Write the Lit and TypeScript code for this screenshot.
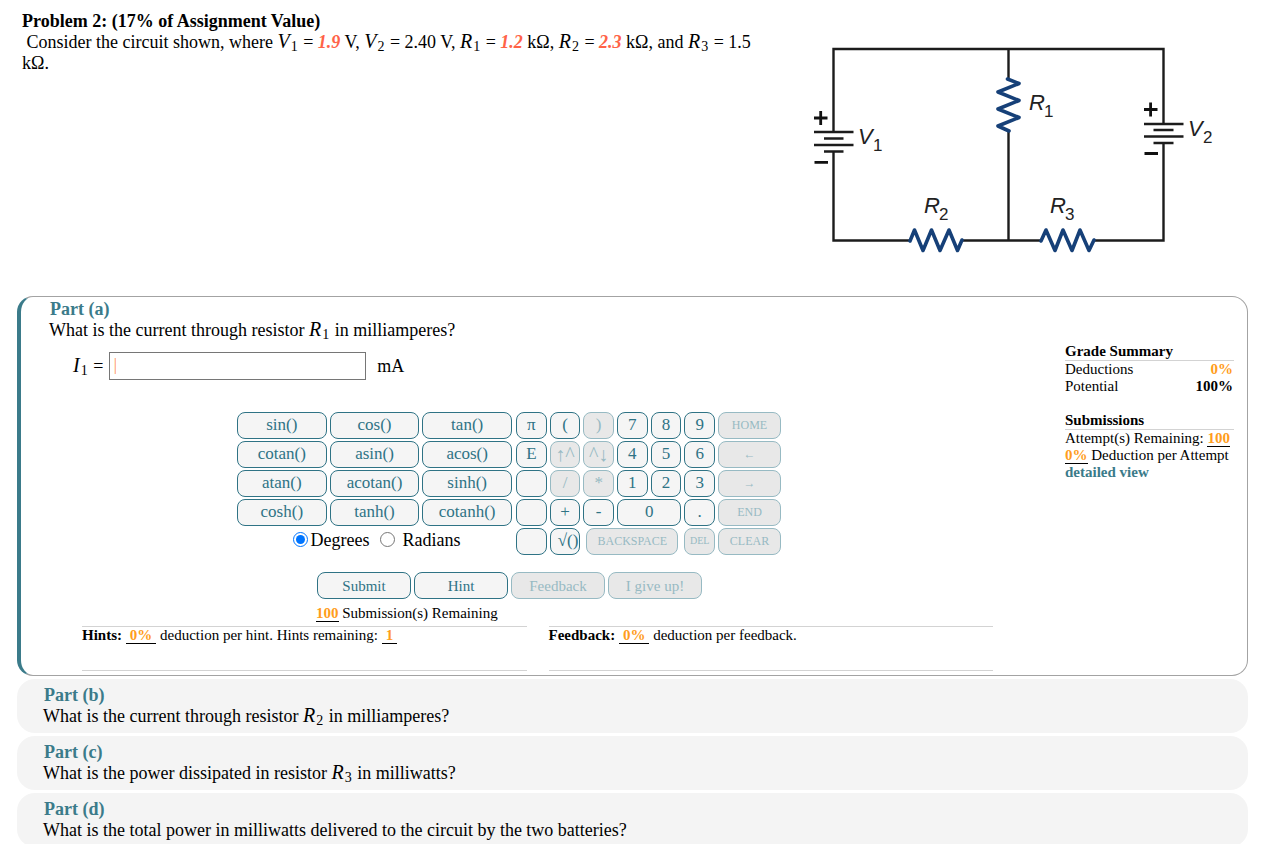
import { LitElement, html, css, svg, nothing } from "lit";
import { customElement, property, state } from "lit/decorators.js";
import { classMap } from "lit/directives/class-map.js";

const mathVar = (name: string, sub: string) =>
  html`<span class="var">${name}<sub>${sub}</sub></span>`;

const mathStyles = css`
  .var {
    margin-right: 1px;
    font-size: 20px;
    line-height: 16px;
    font-style: italic;
  }
  .var sub {
    margin-left: 1px;
    font-size: 14px;
    line-height: 0;
    font-style: normal;
    vertical-align: -3px;
  }
`;

@customElement("circuit-diagram")
export class CircuitDiagram extends LitElement {
  static styles = css`
    :host {
      display: block;
    }
    svg {
      display: block;
      width: 100%;
      max-width: 420px;
    }
    .wire {
      fill: none;
      stroke: #1c1c1c;
      stroke-width: 2.4;
    }
    .sign {
      fill: none;
      stroke: #111;
      stroke-width: 2.8;
    }
    .resistor {
      fill: none;
      stroke: #164078;
      stroke-width: 3.6;
      stroke-linejoin: round;
      stroke-linecap: round;
    }
    text {
      font-family: "Liberation Sans", Arial, sans-serif;
      font-size: 22px;
      font-style: italic;
      fill: #222;
    }
    .sub {
      font-size: 17px;
      font-style: normal;
    }
  `;

  private label(name: string, sub: string, x: number, y: number, dx = 15) {
    return svg`<text x=${x} y=${y}>${name}</text>
      <text class="sub" x=${x + dx} y=${y + 7}>${sub}</text>`;
  }

  render() {
    return html`<svg viewBox="0 0 420 230" role="img" aria-label="Circuit diagram">
      <path
        class="wire"
        d="M33.5 102V19H363.5V94M33.5 121.5V210.500H110M162 210.500H241M294 210.500H363.5V113M208.5 19V49M208.5 101V210.500"
      />
      <path
        class="wire"
        d="M14 102H53.500M24 108.500H43.500M14 115H53.500M24 121.500H43.500M344 94H383.500M353.500 100H373.500M344 106.500H383.500M353.500 113H373.500"
      />
      <path
        class="sign"
        d="M14 88H27.500M20.700 81V95M14.500 132.300H28M344 79.500H357.500M350.600 72.500V86.500M344.500 123.500H358"
      />
      <path class="resistor" d="M207.500 49 219 53.500 198 62 219 70.500 198 79 219 87.500 198 96 209 101" />
      <path class="resistor" d="M110 211 114.500 200 123 220.500 131.500 200 140 220.500 149 200 157.500 220.500 162 210" />
      <path class="resistor" d="M241 211 246 200 255 220.500 263 200 272 220.500 280 200 289 220.500 294 210" />
      ${this.label("V", "1", 58, 114)} ${this.label("R", "1", 229, 80)}
      ${this.label("R", "2", 124, 183)} ${this.label("R", "3", 250, 183)}
      ${this.label("V", "2", 388, 106)}
    </svg>`;
  }
}

interface Key {
  label: string;
  off?: boolean;
  kind?: string;
}

const FUNCTIONS = [
  "sin()", "cos()", "tan()",
  "cotan()", "asin()", "acos()",
  "atan()", "acotan()", "sinh()",
  "cosh()", "tanh()", "cotanh()",
];

const on = (label: string, kind = ""): Key => ({ label, kind });
const off = (label: string, kind = ""): Key => ({ label, kind, off: true });

const KEYS: Key[] = [
  on("π"), on("("), off(")"), on("7"), on("8"), on("9"), off("HOME", "word"),
  on("E"), off("↑^", "arrow"), off("^↓", "arrow"), on("4"), on("5"), on("6"), off("←", "word"),
  on(""), off("/"), off("*"), on("1"), on("2"), on("3"), off("→", "word"),
  on(""), on("+"), on("-"), on("0", "zero"), on("."), off("END", "word"),
  on(""), on("√()", "root"), off("BACKSPACE", "word back"), off("DEL", "tiny"), off("CLEAR", "word"),
];

const buttonStyles = css`
  button {
    box-sizing: border-box;
    height: 27px;
    min-width: 0;
    padding: 0 0 1px;
    border: 1px solid #2f7385;
    border-radius: 8px;
    background: #f5f5f5;
    color: #2f7385;
    font-family: inherit;
    font-size: 17px;
    line-height: 24px;
    text-align: center;
    white-space: nowrap;
  }
  button:disabled {
    border-color: #97bac3;
    background: #e8e8e8;
    color: #97bac3;
  }
`;

@customElement("math-keypad")
export class MathKeypad extends LitElement {
  static styles = [
    buttonStyles,
    css`
      :host {
        display: flex;
        gap: 4px;
      }
      .functions {
        display: grid;
        grid-template-columns: repeat(3, 1fr);
        grid-auto-rows: 27px;
        gap: 2px 3px;
        width: 275px;
      }
      .keys {
        display: grid;
        grid-template-columns: repeat(6, 1fr) 63px;
        grid-auto-rows: 27px;
        gap: 2px 3px;
        width: 265px;
      }
      .word {
        font-size: 12px;
      }
      .tiny {
        font-size: 10px;
      }
      .arrow {
        font-size: 20px;
      }
      .zero {
        grid-column: span 2;
      }
      .back {
        grid-column: span 3;
        margin: 0 3px;
      }
      .root {
        padding-left: 6px;
      }
      .angle {
        grid-column: span 3;
        display: flex;
        justify-content: center;
        align-items: center;
        padding: 0 0 2px 4px;
        font-size: 18px;
      }
      .angle label {
        display: flex;
        align-items: center;
        gap: 3px;
      }
      .angle label + label {
        margin-left: 11px;
        gap: 7px;
      }
      input {
        width: 15px;
        height: 15px;
        margin: 0 0 3px;
      }
    `,
  ];

  render() {
    return html`
      <div class="functions">
        ${FUNCTIONS.map((f) => html`<button type="button">${f}</button>`)}
        <div class="angle">
          <label><input type="radio" name="angle" checked />Degrees</label>
          <label><input type="radio" name="angle" />Radians</label>
        </div>
      </div>
      <div class="keys">
        ${KEYS.map(
          (k) => html`<button type="button" class=${k.kind || nothing} ?disabled=${k.off}>${k.label}</button>`
        )}
      </div>
    `;
  }
}

@customElement("grade-summary")
export class GradeSummary extends LitElement {
  static styles = css`
    :host {
      display: block;
      font-size: 15px;
      line-height: 17px;
    }
    h3 {
      margin: 0;
      font-size: 15px;
      line-height: 17px;
      border-bottom: 1px solid #d3d3d3;
    }
    .row {
      display: flex;
      justify-content: space-between;
      padding-right: 1px;
    }
    .submissions {
      margin-top: 17px;
    }
    .amount {
      color: #ff9d1c;
      font-weight: bold;
    }
    .under {
      border-bottom: 1px solid #000;
    }
    a {
      color: #3b7b8a;
      font-weight: bold;
      text-decoration: none;
    }
  `;

  render() {
    return html`
      <h3>Grade Summary</h3>
      <div class="row"><span>Deductions</span><span class="amount">0%</span></div>
      <div class="row"><span>Potential</span><b>100%</b></div>
      <h3 class="submissions">Submissions</h3>
      <div>Attempt(s) Remaining: <span class="amount under">100</span></div>
      <div><span class="amount under">0%</span> Deduction per Attempt</div>
      <a href="#details">detailed view</a>
    `;
  }
}

@customElement("problem-part")
export class ProblemPart extends LitElement {
  @property() name = "";
  @property({ type: Boolean, reflect: true }) open = false;

  static styles = css`
    :host {
      display: block;
      box-sizing: border-box;
      padding: 6px 14px 6px 26px;
      border-radius: 18px;
      background: #f4f4f4;
      line-height: 21px;
    }
    :host([open]) {
      padding: 2px 13px 4px 28px;
      border: 1px solid #a3a3a3;
      border-left: 4px solid #3b7b8a;
      border-radius: 16px;
      background: #fff;
    }
    h2 {
      margin: 0 0 0 1px;
      color: #3b7b8a;
      font-size: 18px;
      line-height: 21px;
    }
  `;

  render() {
    return html`<h2>${this.name}</h2><slot></slot>`;
  }
}

@customElement("app-root")
export class AppRoot extends LitElement {
  @state() private answer = "";

  static styles = [
    mathStyles,
    buttonStyles,
    css`
      :host {
        display: block;
        padding: 11px 37px 0 17px;
        font-family: "Liberation Serif", "Times New Roman", serif;
        font-size: 18px;
        line-height: 21px;
        color: #000;
      }
      .problem {
        display: grid;
        grid-template-columns: minmax(0, 740fr) minmax(0, 448fr);
        column-gap: 38px;
        padding-left: 5px;
        margin-bottom: 36px;
      }
      h1 {
        margin: 0;
        font-size: 18px;
        line-height: 21px;
      }
      .statement {
        margin: 0;
      }
      .given {
        color: #ff6347;
        font-weight: bold;
        font-style: italic;
      }
      circuit-diagram {
        margin-top: 19px;
      }
      .parts {
        display: flex;
        flex-direction: column;
        gap: 3px;
      }
      .body {
        display: grid;
        grid-template-columns: minmax(0, 1fr) 169px;
        column-gap: 72px;
      }
      .answer {
        display: flex;
        align-items: center;
        margin: 11px 0 32px 24px;
      }
      .answer input {
        box-sizing: border-box;
        width: 257px;
        height: 28px;
        margin: 0 11px 0 6px;
        padding: 0 6px;
        border: 1px solid #767676;
        font: inherit;
        outline: none;
      }
      .answer input.blank {
        background: linear-gradient(90deg, #ffe9b8 1px, #ffb3ae 1px) 4px 5px / 2px 16px no-repeat #fff;
      }
      math-keypad {
        margin-left: 188px;
      }
      .actions {
        display: grid;
        grid-template-columns: repeat(4, 1fr);
        gap: 3px;
        width: 385px;
        margin: 17px 0 6px 268px;
      }
      .actions button {
        padding-bottom: 0;
        font-size: 15px;
      }
      .small {
        font-size: 15px;
        line-height: 17px;
      }
      .remaining {
        margin-left: 267px;
        padding-bottom: 4px;
      }
      .amount {
        color: #ff9d1c;
        font-weight: bold;
        border-bottom: 1px solid #000;
      }
      .wide {
        padding: 0 4px;
      }
      .costs {
        display: grid;
        grid-template-columns: 1fr 1fr;
        column-gap: 22px;
        margin-left: 33px;
      }
      .cost {
        box-sizing: border-box;
        min-height: 45px;
        border-top: 1px solid #d3d3d3;
        border-bottom: 1px solid #d3d3d3;
      }
      grade-summary {
        margin-top: 2px;
      }
    `,
  ];

  render() {
    const r = (n: string) => mathVar("R", n);
    const given = (v: string) => html`<span class="given">${v}</span>`;
    return html`
      <section class="problem">
        <div>
          <h1>Problem 2: (17% of Assignment Value)</h1>
          <p class="statement">&nbsp;Consider the circuit shown, where ${mathVar("V", "1")} = ${given("1.9")} V, ${mathVar("V", "2")} = 2.40 V, ${r("1")} = ${given("1.2")} kΩ, ${r("2")} = ${given("2.3")} kΩ, and ${r("3")} = 1.5 kΩ.</p>
        </div>
        <circuit-diagram></circuit-diagram>
      </section>
      <main class="parts">
        <problem-part open name="Part (a)">
          <div>What is the current through resistor ${r("1")} in milliamperes?</div>
          <div class="body">
            <div>
              <div class="answer">
                <label for="current">${mathVar("I", "1")} =</label>
                <input
                  id="current"
                  type="text"
                  class=${classMap({ blank: !this.answer })}
                  .value=${this.answer}
                  @input=${(e: InputEvent) => (this.answer = (e.target as HTMLInputElement).value)}
                />
                <span>mA</span>
              </div>
              <math-keypad></math-keypad>
              <div class="actions">
                <button type="button">Submit</button>
                <button type="button">Hint</button>
                <button type="button" disabled>Feedback</button>
                <button type="button" disabled>I give up!</button>
              </div>
              <div class="small remaining"><span class="amount">100</span> Submission(s) Remaining</div>
              <div class="small costs">
                <div class="cost">
                  <b>Hints:</b> <span class="amount wide">0%</span>&nbsp;deduction per hint. Hints remaining:
                  <span class="amount wide">1</span>
                </div>
                <div class="cost">
                  <b>Feedback:</b> <span class="amount wide">0%</span>&nbsp;deduction per feedback.
                </div>
              </div>
            </div>
            <grade-summary></grade-summary>
          </div>
        </problem-part>
        <problem-part name="Part (b)">
          <div>What is the current through resistor ${r("2")} in milliamperes?</div>
        </problem-part>
        <problem-part name="Part (c)">
          <div>What is the power dissipated in resistor ${r("3")} in milliwatts?</div>
        </problem-part>
        <problem-part name="Part (d)">
          <div>What is the total power in milliwatts delivered to the circuit by the two batteries?</div>
        </problem-part>
      </main>
    `;
  }
}
